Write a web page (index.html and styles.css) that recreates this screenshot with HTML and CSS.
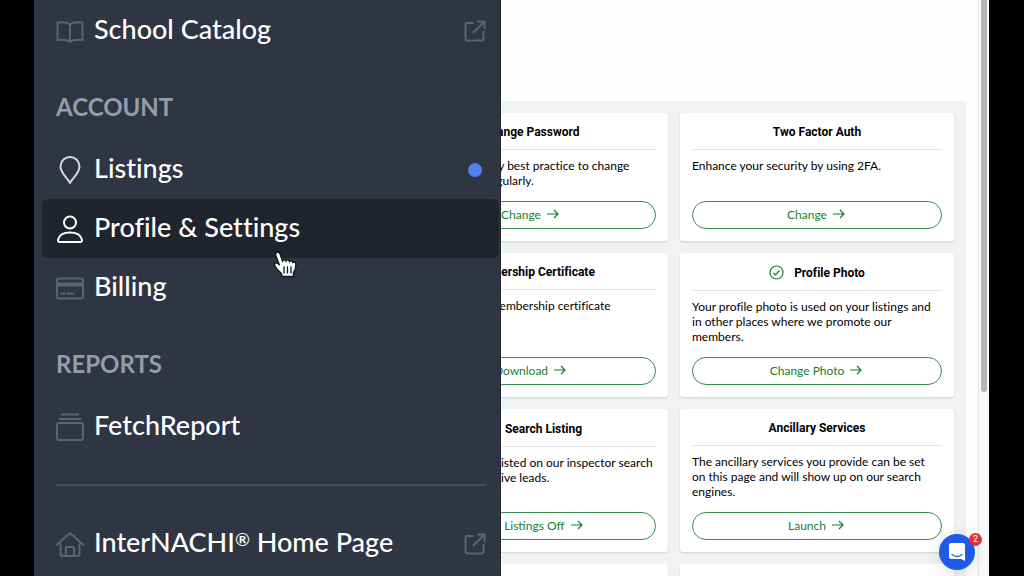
FILE: index.html
```html
<!DOCTYPE html>
<html lang="en">
<head>
  <meta charset="UTF-8" />
  <meta name="viewport" content="width=device-width, initial-scale=1.0"/>
  <title>Profile &amp; Settings</title>
  <link rel="stylesheet" href="styles.css">
</head>
<body>
  <div class="shell">
    <nav class="drawer">
      <a class="item" href="#">
        <svg class="icon" viewBox="0 0 28 28"><path d="M14 7.500C11.500 5.500 6 5 1.500 5.500V23c4.500-.500 10 0 12.500 2 2.500-2 8-2.500 12.500-2V5.500C22 5 16.500 5.500 14 7.500zV25"/></svg>
        <span class="label">School Catalog</span>
        <svg class="external" viewBox="0 0 22 22"><path d="M9 3H3.500Q1.500 3 1.500 5v13.500q0 2 2 2h14q2 0 2-2V12M9.500 12.500 20.500 1.500M14 1.500h6.500V8"/></svg>
      </a>

      <h2 class="group">ACCOUNT</h2>
      <a class="item bright" href="#">
        <svg class="icon" viewBox="0 0 28 28"><path d="M14 27C12 23 4.500 17 4.500 10.500a9.500 9.500 0 0 1 19 0C23.500 17 16 23 14 27z"/></svg>
        <span class="label">Listings</span>
        <span class="dot"></span>
      </a>
      <a class="item active" href="#">
        <svg class="icon" viewBox="0 0 28 28"><circle cx="14" cy="7.500" r="6"/><path d="M3.500 27C1.500 27 2 25 2.500 23.500 4 19 8 17.500 14 17.500S24 19 25.500 23.500C26 25 26.500 27 24.500 27z"/></svg>
        <span class="label">Profile &amp; Settings</span>
      </a>
      <a class="item" href="#">
        <svg class="icon" viewBox="0 0 28 28"><rect x="1" y="4.500" width="26" height="20" rx="2"/><path class="stripe" d="M1 10.500h26"/><path d="M5.500 19.500h3M11.500 19.500h6"/></svg>
        <span class="label">Billing</span>
      </a>

      <h2 class="group">REPORTS</h2>
      <a class="item" href="#">
        <svg class="icon" viewBox="0 0 28 28"><rect x="1" y="10" width="26" height="17" rx="2"/><path d="M3.500 6h21M6 1.500h16"/></svg>
        <span class="label">FetchReport</span>
      </a>

      <hr class="divider">

      <a class="item" href="#">
        <svg class="icon" viewBox="0 0 28 28"><path d="M1 14.500 14 3l13 11.500M4.500 14v10q0 2 2 2h15q2 0 2-2V14M10 26v-8q0-1 1-1h6q1 0 1 1v8"/></svg>
        <span class="label">InterNACHI<sup>®</sup> Home Page</span>
        <svg class="external" viewBox="0 0 22 22"><path d="M9 3H3.500Q1.500 3 1.500 5v13.500q0 2 2 2h14q2 0 2-2V12M9.500 12.500 20.500 1.500M14 1.500h6.500V8"/></svg>
      </a>
    </nav>

    <main class="content">
      <div class="panel">
        <section class="card">
          <h3>Change Password</h3>
          <p>It's a good security best practice to change<br>your password regularly.</p>
          <button>Change <svg class="arrow" viewBox="0 0 12 10"><path d="M0 5h11M7 1l4 4-4 4"/></svg></button>
        </section>
        <section class="card">
          <h3>Two Factor Auth</h3>
          <p>Enhance your security by using 2FA.</p>
          <button>Change <svg class="arrow" viewBox="0 0 12 10"><path d="M0 5h11M7 1l4 4-4 4"/></svg></button>
        </section>
        <section class="card">
          <h3>Membership Certificate</h3>
          <p>Download your membership certificate</p>
          <button>Download <svg class="arrow" viewBox="0 0 12 10"><path d="M0 5h11M7 1l4 4-4 4"/></svg></button>
        </section>
        <section class="card">
          <h3><svg class="check" viewBox="0 0 15 15"><circle cx="7.500" cy="7.500" r="6.500"/><path d="M4.500 8l2 2 4-4.500"/></svg>Profile Photo</h3>
          <p>Your profile photo is used on your listings and in other places where we promote our members.</p>
          <button>Change Photo <svg class="arrow" viewBox="0 0 12 10"><path d="M0 5h11M7 1l4 4-4 4"/></svg></button>
        </section>
        <section class="card">
          <h3><svg class="check" viewBox="0 0 15 15"><circle cx="7.500" cy="7.500" r="6.500"/><path d="M4.500 8l2 2 4-4.500"/></svg>Search Listing</h3>
          <p>You may become listed on our inspector search database and receive leads.</p>
          <button>Turn Listings Off <svg class="arrow" viewBox="0 0 12 10"><path d="M0 5h11M7 1l4 4-4 4"/></svg></button>
        </section>
        <section class="card">
          <h3>Ancillary Services</h3>
          <p>The ancillary services you provide can be set<br>on this page and will show up on our search engines.</p>
          <button>Launch <svg class="arrow" viewBox="0 0 12 10"><path d="M0 5h11M7 1l4 4-4 4"/></svg></button>
        </section>
        <section class="card"></section>
        <section class="card"></section>
      </div>
    </main>

    <div class="scrollbar"><div class="thumb"></div></div>

    <button class="chat" aria-label="Open chat">
      <svg viewBox="0 0 18 20"><path class="bubble" d="M3 1h12q2 0 2 2v16l-4-2H3q-2 0-2-2V3q0-2 2-2z"/><path class="smile" d="M4 12.500q5 4 10 0"/></svg>
      <span class="badge">2</span>
    </button>

    <svg class="pointer" viewBox="0 0 28 30"><path d="M6 3C7.500 1 9.500 2.500 10 4l2.500 7c.500-1.500 3-1.500 3.500 0 .500-1.500 3-1.500 3.500.500 1-1.200 3-.800 3.300 1 1.500-1 3 0 3 1.500 0 4-.300 6-2.300 8.500v4H12.500L11 23c-2-1.500-4.500-4-6-7-1.500-2.500 1-4 3-2.500l1.500 1.500L5.500 5z"/><path class="fingers" d="M14 17v6M17.500 17v6M21 17v6"/></svg>
  </div>
</body>
</html>
```
FILE: styles.css
```css
* {
  box-sizing: border-box;
}

body {
  margin: 0;
  padding: 0 35px 0 34px;
  background-color: #000;
  color: #000;
  font-family: Lato, sans-serif;
  font-variant-ligatures: none;
}

.shell {
  position: relative;
  display: flex;
  height: 100vh;
  overflow: hidden;
  background-color: #fefefe;
}

/* navigation drawer, slides over the page */
.drawer {
  position: absolute;
  top: 0;
  bottom: 0;
  left: 0;
  z-index: 1;
  width: 467px;
  padding: 1px 1px 0 8px;
  overflow: hidden;
  background-color: #2f3542;
  border-right: 1px solid #222733;
}

.item {
  display: flex;
  align-items: center;
  gap: 10px;
  height: 59px;
  padding: 0 13px 0 14px;
  border-radius: 6px;
  color: #fff;
  font-size: 27px;
  font-weight: 500;
  text-decoration: none;
}

.item.active {
  background-color: #20242d;
}

.label {
  padding-bottom: 4px;
}

.label sup {
  font-size: 18px;
  line-height: 0;
  vertical-align: 6px;
}

.icon {
  width: 28px;
  height: 28px;
}

.icon,
.external {
  fill: none;
  stroke: #5d6370;
  stroke-width: 2;
  stroke-linecap: round;
  stroke-linejoin: round;
}

.icon .stripe {
  stroke-width: 4;
  stroke-linecap: butt;
}

.bright .icon {
  stroke: #d3d8e4;
}

.active .icon {
  stroke: #fff;
}

.external {
  width: 22px;
  height: 22px;
  margin-left: auto;
}

.dot {
  width: 14px;
  height: 14px;
  margin: 0 4px 0 auto;
  border-radius: 50%;
  background-color: #4e80ee;
}

.group {
  margin: 0;
  padding: 32px 14px 18px;
  color: #959cab;
  font-size: 24px;
  line-height: 30px;
  font-weight: 700;
}

.divider {
  height: 2px;
  margin: 28px 13px 28px 14px;
  border: none;
  background-color: #454b58;
}

.content {
  flex: 1;
  padding: 101px 12px 0 348px;
}

.panel {
  display: grid;
  grid-template-columns: 1fr 1fr;
  gap: 12px;
  padding: 12px;
  border-radius: 4px;
  background-color: #f1f2f3;
}

.card {
  display: flex;
  flex-direction: column;
  min-height: 128px;
  padding: 12px;
  border-radius: 3px;
  background-color: #fff;
  box-shadow: 0 1px 2px rgba(0,0,0,0.15);
}

.card h3 {
  display: flex;
  align-items: center;
  justify-content: center;
  margin: 0 0 8px;
  padding-bottom: 10px;
  border-bottom: 1px solid #e2e4e7;
  font-family: Roboto, sans-serif;
  font-size: 12px;
  line-height: 14px;
  font-weight: 700;
}

.card p {
  margin: 0 0 13px;
  font-size: 12px;
  line-height: 15px;
}

.card button {
  display: flex;
  align-items: center;
  justify-content: center;
  gap: 6px;
  height: 28px;
  margin-top: auto;
  padding: 0 2px 2px 0;
  border: 1px solid #3a8a50;
  border-radius: 14px;
  background-color: #fff;
  color: #14802f;
  font-family: inherit;
  font-size: 12px;
}

.arrow {
  width: 12px;
  height: 10px;
  fill: none;
  stroke: #14802f;
  stroke-width: 1.2;
}

.check {
  width: 15px;
  height: 15px;
  margin-right: 10px;
  fill: none;
  stroke: #14802f;
  stroke-width: 1.2;
}

.scrollbar {
  width: 11px;
  padding: 0 2px;
  border-left: 1px solid #e6e6e6;
  background-color: #fafafa;
}

.thumb {
  height: 68%;
  border-radius: 0 0 3px 3px;
  background-color: #b4b4b4;
}

.chat {
  position: absolute;
  right: 14px;
  bottom: 6px;
  display: flex;
  align-items: center;
  justify-content: center;
  width: 36px;
  height: 36px;
  padding: 0;
  border: none;
  border-radius: 50%;
  background-color: #1f5ae6;
  box-shadow: 0 2px 16px rgba(0,0,0,0.15);
}

.chat svg {
  width: 18px;
  height: 20px;
}

.bubble {
  fill: #fff;
}

.smile {
  fill: none;
  stroke: #1f5ae6;
  stroke-width: 1.3;
  stroke-linecap: round;
}

.badge {
  position: absolute;
  top: -1px;
  right: -7px;
  width: 13px;
  height: 13px;
  border-radius: 50%;
  background-color: #e2323c;
  color: #fff;
  font-family: Roboto, sans-serif;
  font-size: 9px;
  line-height: 13px;
}

.pointer {
  position: absolute;
  top: 250px;
  left: 236px;
  z-index: 2;
  width: 28px;
  height: 30px;
  fill: #fff;
  stroke: #111;
  stroke-width: 1.3;
}

.fingers {
  stroke-linecap: round;
}
```
